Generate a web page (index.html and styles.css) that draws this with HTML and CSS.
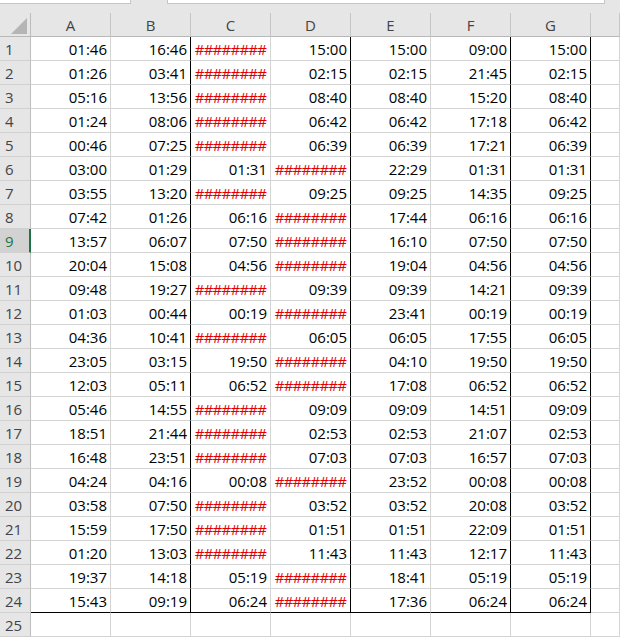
FILE: index.html
```html
<!DOCTYPE html>
<html>
<head>
<meta charset="utf-8">
<link rel="stylesheet" href="styles.css">
</head>
<body>
<div class="fbar"><div class="namebox"></div><div class="formula"></div></div>
<div class="sheet">
<div class="row hdr"><div class="corner"><svg width="16" height="16" viewBox="0 0 16 16"><polygon points="16,0 16,16 0,16" fill="#b5b5b5"/></svg></div><div>A</div><div>B</div><div>C</div><div>D</div><div>E</div><div>F</div><div>G</div><div></div></div>
<div class="row"><div class="rh">1</div><div class="t">01:46</div><div class="t bk">16:46</div><div class="x">########</div><div class="t bk">15:00</div><div class="t">15:00</div><div class="t bk">09:00</div><div class="t bk">15:00</div><div></div></div>
<div class="row"><div class="rh">2</div><div class="t">01:26</div><div class="t bk">03:41</div><div class="x">########</div><div class="t bk">02:15</div><div class="t">02:15</div><div class="t bk">21:45</div><div class="t bk">02:15</div><div></div></div>
<div class="row"><div class="rh">3</div><div class="t">05:16</div><div class="t bk">13:56</div><div class="x">########</div><div class="t bk">08:40</div><div class="t">08:40</div><div class="t bk">15:20</div><div class="t bk">08:40</div><div></div></div>
<div class="row"><div class="rh">4</div><div class="t">01:24</div><div class="t bk">08:06</div><div class="x">########</div><div class="t bk">06:42</div><div class="t">06:42</div><div class="t bk">17:18</div><div class="t bk">06:42</div><div></div></div>
<div class="row"><div class="rh">5</div><div class="t">00:46</div><div class="t bk">07:25</div><div class="x">########</div><div class="t bk">06:39</div><div class="t">06:39</div><div class="t bk">17:21</div><div class="t bk">06:39</div><div></div></div>
<div class="row"><div class="rh">6</div><div class="t">03:00</div><div class="t bk">01:29</div><div class="t">01:31</div><div class="x bk">########</div><div class="t">22:29</div><div class="t bk">01:31</div><div class="t bk">01:31</div><div></div></div>
<div class="row"><div class="rh">7</div><div class="t">03:55</div><div class="t bk">13:20</div><div class="x">########</div><div class="t bk">09:25</div><div class="t">09:25</div><div class="t bk">14:35</div><div class="t bk">09:25</div><div></div></div>
<div class="row"><div class="rh">8</div><div class="t">07:42</div><div class="t bk">01:26</div><div class="t">06:16</div><div class="x bk">########</div><div class="t">17:44</div><div class="t bk">06:16</div><div class="t bk">06:16</div><div></div></div>
<div class="row"><div class="rh sel">9</div><div class="t">13:57</div><div class="t bk">06:07</div><div class="t">07:50</div><div class="x bk">########</div><div class="t">16:10</div><div class="t bk">07:50</div><div class="t bk">07:50</div><div></div></div>
<div class="row"><div class="rh">10</div><div class="t">20:04</div><div class="t bk">15:08</div><div class="t">04:56</div><div class="x bk">########</div><div class="t">19:04</div><div class="t bk">04:56</div><div class="t bk">04:56</div><div></div></div>
<div class="row"><div class="rh">11</div><div class="t">09:48</div><div class="t bk">19:27</div><div class="x">########</div><div class="t bk">09:39</div><div class="t">09:39</div><div class="t bk">14:21</div><div class="t bk">09:39</div><div></div></div>
<div class="row"><div class="rh">12</div><div class="t">01:03</div><div class="t bk">00:44</div><div class="t">00:19</div><div class="x bk">########</div><div class="t">23:41</div><div class="t bk">00:19</div><div class="t bk">00:19</div><div></div></div>
<div class="row"><div class="rh">13</div><div class="t">04:36</div><div class="t bk">10:41</div><div class="x">########</div><div class="t bk">06:05</div><div class="t">06:05</div><div class="t bk">17:55</div><div class="t bk">06:05</div><div></div></div>
<div class="row"><div class="rh">14</div><div class="t">23:05</div><div class="t bk">03:15</div><div class="t">19:50</div><div class="x bk">########</div><div class="t">04:10</div><div class="t bk">19:50</div><div class="t bk">19:50</div><div></div></div>
<div class="row"><div class="rh">15</div><div class="t">12:03</div><div class="t bk">05:11</div><div class="t">06:52</div><div class="x bk">########</div><div class="t">17:08</div><div class="t bk">06:52</div><div class="t bk">06:52</div><div></div></div>
<div class="row"><div class="rh">16</div><div class="t">05:46</div><div class="t bk">14:55</div><div class="x">########</div><div class="t bk">09:09</div><div class="t">09:09</div><div class="t bk">14:51</div><div class="t bk">09:09</div><div></div></div>
<div class="row"><div class="rh">17</div><div class="t">18:51</div><div class="t bk">21:44</div><div class="x">########</div><div class="t bk">02:53</div><div class="t">02:53</div><div class="t bk">21:07</div><div class="t bk">02:53</div><div></div></div>
<div class="row"><div class="rh">18</div><div class="t">16:48</div><div class="t bk">23:51</div><div class="x">########</div><div class="t bk">07:03</div><div class="t">07:03</div><div class="t bk">16:57</div><div class="t bk">07:03</div><div></div></div>
<div class="row"><div class="rh">19</div><div class="t">04:24</div><div class="t bk">04:16</div><div class="t">00:08</div><div class="x bk">########</div><div class="t">23:52</div><div class="t bk">00:08</div><div class="t bk">00:08</div><div></div></div>
<div class="row"><div class="rh">20</div><div class="t">03:58</div><div class="t bk">07:50</div><div class="x">########</div><div class="t bk">03:52</div><div class="t">03:52</div><div class="t bk">20:08</div><div class="t bk">03:52</div><div></div></div>
<div class="row"><div class="rh">21</div><div class="t">15:59</div><div class="t bk">17:50</div><div class="x">########</div><div class="t bk">01:51</div><div class="t">01:51</div><div class="t bk">22:09</div><div class="t bk">01:51</div><div></div></div>
<div class="row"><div class="rh">22</div><div class="t">01:20</div><div class="t bk">13:03</div><div class="x">########</div><div class="t bk">11:43</div><div class="t">11:43</div><div class="t bk">12:17</div><div class="t bk">11:43</div><div></div></div>
<div class="row"><div class="rh">23</div><div class="t">19:37</div><div class="t bk">14:18</div><div class="t">05:19</div><div class="x bk">########</div><div class="t">18:41</div><div class="t bk">05:19</div><div class="t bk">05:19</div><div></div></div>
<div class="row last"><div class="rh">24</div><div class="t">15:43</div><div class="t bk">09:19</div><div class="t">06:24</div><div class="x bk">########</div><div class="t">17:36</div><div class="t bk">06:24</div><div class="t bk">06:24</div><div></div></div>
<div class="row"><div class="rh">25</div><div></div><div></div><div></div><div></div><div></div><div></div><div></div><div></div></div>
</div>
</body>
</html>
```

FILE: styles.css
```css
* { box-sizing: border-box; }
body {
  margin: 0;
  background: #ffffff;
  font-family: "Open Sans", "Liberation Sans", sans-serif;
  font-size: 15px;
  color: #000;
  overflow: hidden;
}
.fbar {
  display: flex;
  align-items: flex-start;
  height: 13px;
  background: #e6e6e6;
}
.namebox {
  width: 131px;
  height: 4px;
  background: #fff;
  border-right: 1px solid #c6c6c6;
  border-bottom: 1px solid #c6c6c6;
}
.formula {
  margin-left: 36px;
  width: 438px;
  height: 4px;
  background: #fff;
  border-left: 1px solid #c6c6c6;
  border-right: 1px solid #c6c6c6;
  border-bottom: 1px solid #c6c6c6;
}
.row {
  display: grid;
  grid-template-columns: 31px repeat(7, 80px) 29px;
  height: 24px;
}
.row > div {
  border-right: 1px solid #d4d4d4;
  border-bottom: 1px solid #d4d4d4;
  padding: 2px 3px 0 3px;
  line-height: 21px;
  white-space: nowrap;
  overflow: hidden;
}
.hdr { background: #e6e6e6; }
.hdr > div {
  border-right: 1px solid #c6c6c6;
  border-bottom: 1px solid #b8b8b8;
  text-align: center;
  color: #444;
  padding-top: 1px;
  line-height: 22px;
}
.hdr > .corner {
  display: flex;
  justify-content: flex-end;
  align-items: flex-end;
  padding: 0 3px 2px 0;
  border-right-color: #bdbdbd;
}
.corner svg { display: block; }
.t { text-align: right; }
.x {
  color: #e00000;
  text-align: center;
  letter-spacing: -0.75px;
}
.row > .rh {
  background: #e6e6e6;
  color: #444;
  text-align: left;
  padding-left: 5px;
  border-right-color: #bdbdbd;
  border-bottom-color: #d0d0d0;
}
.row > .rh.sel {
  background: #d2d2d2;
  color: #217346;
  border-right: 2px solid #217346;
}
.row > .bk { border-right-color: #000; }
.last > div:not(.rh):not(:last-child) { border-bottom-color: #000; }
```
